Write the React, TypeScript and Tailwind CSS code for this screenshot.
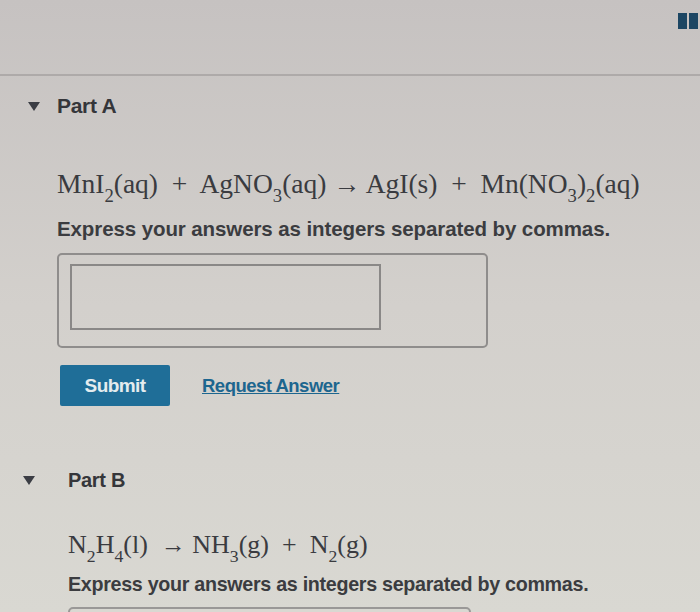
import React from "react";

const serif = { fontFamily: '"Liberation Serif", "Times New Roman", serif' };

function Tri() {
  return (
    <svg width="12" height="9" viewBox="0 0 12 9" className="shrink-0">
      <polygon points="0,0 12,0 6,9" fill="#3b3d44" />
    </svg>
  );
}

function Sub({ children }: { children: React.ReactNode }) {
  return <sub className="text-[0.68em] leading-none" style={{ verticalAlign: "-0.25em" }}>{children}</sub>;
}

export default function App() {
  return (
    <div className="w-[700px] h-[612px] overflow-hidden bg-linear-to-b from-[#c6c2c1] via-[#d3d0cc] to-[#d9d8d2] text-[#35363a] font-['Liberation_Sans',Arial,sans-serif]">
      <div className="flex justify-end pt-[13px] pr-[2px] h-[74px]">
        <div className="flex gap-[2px]">
          <div className="w-[9px] h-[16px] bg-[#1c4663]" />
          <div className="w-[9px] h-[16px] bg-[#1c4663]" />
        </div>
      </div>
      <div className="border-t-2 border-[#aeaaa9]" />

      {/* Part A */}
      <div className="pl-[28px] pt-[18px]">
        <div className="flex items-center gap-[17px]">
          <Tri />
          <div className="text-[21px] font-bold tracking-[-0.3px] leading-[24px]">Part A</div>
        </div>
        <div className="pl-[29px]">
          <div className="mt-[51px] text-[27.5px] leading-[30px] text-[#3a3b40] whitespace-nowrap" style={serif}>
            MnI<Sub>2</Sub>(aq) &nbsp;+&nbsp; AgNO<Sub>3</Sub>(aq) <span className="text-[27px]">→</span> AgI(s) &nbsp;+&nbsp; Mn(NO<Sub>3</Sub>)<Sub>2</Sub>(aq)
          </div>
          <div className="mt-[16px] text-[20.5px] leading-[24px] font-bold tracking-[-0.1px] text-[#3b3c40]">
            Express your answers as integers separated by commas.
          </div>
          <div className="mt-[12px] w-[431px] h-[95px] border-2 border-[#8f8d8c] rounded-[5px] pl-[11px] pt-[9px]">
            <div className="w-[311px] h-[66px] border-2 border-[#8a8887]" />
          </div>
          <div className="mt-[17px] flex items-center gap-[32px] pl-[3px]">
            <div className="w-[110px] h-[41px] bg-[#1f6e98] rounded-[2px] flex items-center justify-center text-[#e4ecef] text-[19px] font-bold tracking-[-0.6px]">
              Submit
            </div>
            <div className="text-[#1d668f] text-[18.5px] underline tracking-[-0.5px] font-bold">Request Answer</div>
          </div>
        </div>
      </div>

      {/* Part B */}
      <div className="pl-[23px] pt-[62px]">
        <div className="flex items-center gap-[33px]">
          <Tri />
          <div className="text-[20px] font-bold tracking-[-0.3px] leading-[24px]">Part B</div>
        </div>
        <div className="pl-[45px]">
          <div className="mt-[40px] text-[26px] leading-[26px] text-[#3a3b40] whitespace-nowrap" style={serif}>
            N<Sub>2</Sub>H<Sub>4</Sub>(l) &nbsp;<span className="text-[25px]">→</span> NH<Sub>3</Sub>(g) &nbsp;+&nbsp; N<Sub>2</Sub>(g)
          </div>
          <div className="mt-[12px] text-[19.7px] leading-[22px] font-bold tracking-[-0.3px] text-[#3b3c40]">
            Express your answers as integers separated by commas.
          </div>
          <div className="mt-[12px] w-[403px] h-[60px] border-2 border-[#9a9897] rounded-[5px]" />
        </div>
      </div>
    </div>
  );
}
